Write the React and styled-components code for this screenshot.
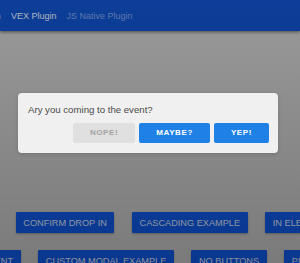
import styled, { createGlobalStyle } from 'styled-components'

const GlobalStyle = createGlobalStyle`
  html, body {
    margin: 0;
    padding: 0;
  }
  body {
    width: 300px;
    height: 263px;
    overflow: hidden;
    background: #c8c8c8;
    font-family: 'Liberation Sans', Arial, Helvetica, sans-serif;
  }
`

const Page = styled.div`
  position: relative;
  width: 300px;
  height: 263px;
  overflow: hidden;
`

const Header = styled.header`
  height: 31px;
  background: #1050c6;
  box-shadow: 0 1px 3px rgba(0, 0, 0, 0.5);
  display: flex;
  align-items: center;
  white-space: nowrap;
`

const Nav = styled.nav`
  display: flex;
  gap: 10px;
  margin-left: -59.5px;
`

const NavLink = styled.a`
  font-size: 9px;
  color: ${(p) => (p.$active ? 'rgba(255, 255, 255, 0.9)' : 'rgba(255, 255, 255, 0.45)')};
  text-decoration: none;
`

const Content = styled.main`
  padding-top: 181px;
  display: flex;
  flex-direction: column;
  align-items: flex-start;
  gap: 17px;
`

const Row = styled.div`
  display: flex;
  width: max-content;
  gap: 17.5px;
  white-space: nowrap;
  margin-left: ${(p) => p.$offset}px;
`

const DemoButton = styled.button`
  flex: none;
  height: 21px;
  padding: 0 7.6px;
  border: none;
  border-radius: 1px;
  background: #105ae8;
  color: rgba(255, 255, 255, 0.88);
  font-family: inherit;
  font-size: 9.2px;
  white-space: nowrap;
  text-transform: uppercase;
  box-shadow: 0 1px 2px rgba(0, 0, 0, 0.3);
`

const Overlay = styled.div`
  position: absolute;
  inset: 0;
  background: linear-gradient(rgba(0, 0, 0, 0.23), rgba(0, 0, 0, 0.39));
  padding-top: 93px;
`

const Dialog = styled.div`
  width: 241px;
  margin-left: 18px;
  padding: 11px 9px 10px 10px;
  background: #f0f0f0;
  border-radius: 4px;
  box-shadow: 0 1px 4px rgba(0, 0, 0, 0.15);
`

const Message = styled.p`
  margin: 0 0 6px;
  font-size: 9.65px;
  line-height: 12.5px;
  color: #4a4a4a;
`

const Actions = styled.div`
  display: flex;
  justify-content: flex-end;
  gap: 4px;
`

const ActionButton = styled.button`
  height: 20px;
  padding: 0 17px;
  border: none;
  border-radius: 2px;
  font-family: inherit;
  font-size: 8px;
  font-weight: 700;
  letter-spacing: 0.6px;
  background: ${(p) => (p.$primary ? '#1f80e6' : '#e0e0e0')};
  color: ${(p) => (p.$primary ? '#ffffff' : '#a3a3a3')};
`

const App = () => {
  return (
    <Page>
      <GlobalStyle />
      <Header>
        <Nav>
          <NavLink>Documentation</NavLink>
          <NavLink $active>VEX Plugin</NavLink>
          <NavLink>JS Native Plugin</NavLink>
        </Nav>
      </Header>
      <Content>
        <Row $offset={15.7}>
          <DemoButton>Confirm drop in</DemoButton>
          <DemoButton>Cascading example</DemoButton>
          <DemoButton>In element</DemoButton>
        </Row>
        <Row $offset={-83.8}>
          <DemoButton>Dynamic content</DemoButton>
          <DemoButton>Custom modal example</DemoButton>
          <DemoButton>No buttons</DemoButton>
          <DemoButton>Prompt</DemoButton>
        </Row>
      </Content>
      <Overlay>
        <Dialog>
          <Message>Ary you coming to the event?</Message>
          <Actions>
            <ActionButton>NOPE!</ActionButton>
            <ActionButton $primary>MAYBE?</ActionButton>
            <ActionButton $primary>YEP!</ActionButton>
          </Actions>
        </Dialog>
      </Overlay>
    </Page>
  )
}

export default App
